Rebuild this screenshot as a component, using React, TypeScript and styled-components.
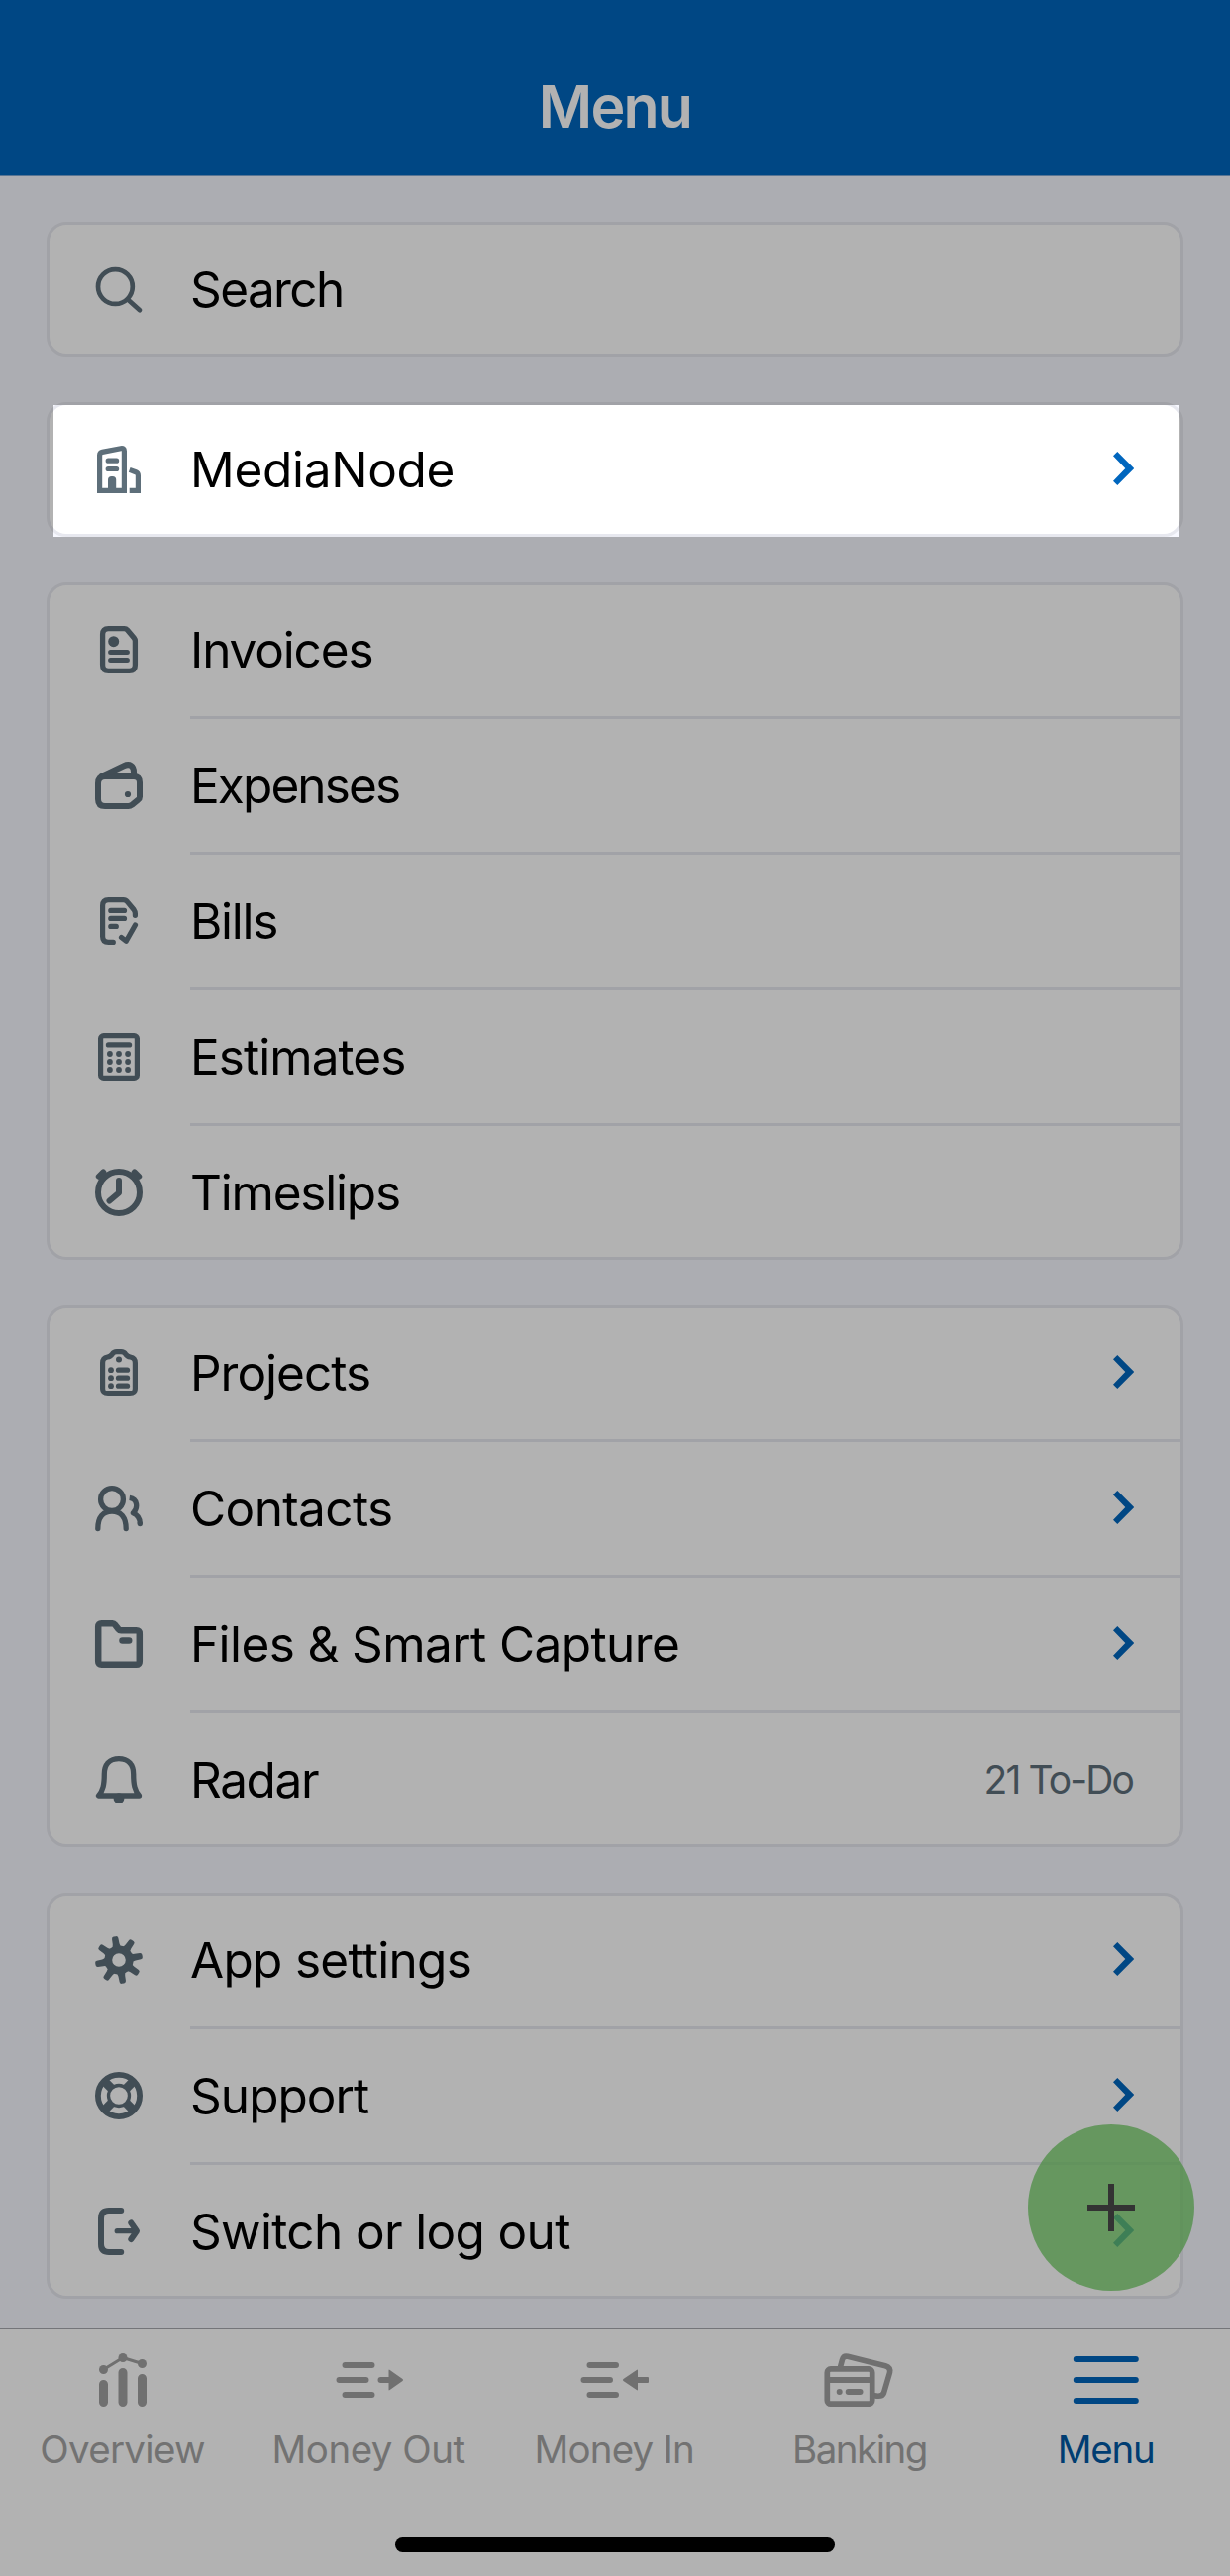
import React from "react";
import styled, { createGlobalStyle } from "styled-components";

const GlobalStyle = createGlobalStyle`
  * { box-sizing: border-box; }
  body { margin: 0; background: #f7f8ff; }
`;

const blue = "#0066be";
const slate = "#5e6f7a";

const Screen = styled.div`
  position: relative;
  display: flex;
  flex-direction: column;
  width: 1242px;
  height: 2601px;
  overflow: hidden;
  background: #f7f8ff;
  font-family: Inter, "Liberation Sans", sans-serif;
  color: #000;
`;

const Header = styled.header`
  display: flex;
  align-items: center;
  justify-content: center;
  height: 178px;
  padding-top: 38px;
  background: ${blue};
  border-bottom: 1px solid #7ea8d4;
`;

const Title = styled.h1`
  margin: 0;
  font-size: 59px;
  font-weight: 600;
  letter-spacing: -1.8px;
  color: #fff;
`;

const Content = styled.main`
  display: flex;
  flex: 1;
  flex-direction: column;
  gap: 46px;
  padding: 46px 47px 0;
`;

const Card = styled.section`
  border: 3px solid #e7e8ef;
  border-radius: 20px;
  background: #fff;
`;

const List = styled.div`
  display: flex;
  flex-direction: column;
  margin: -2px 0;
`;

const Row = styled.div`
  display: grid;
  grid-template-columns: 142px 1fr;
  align-items: start;
`;

const IconCell = styled.div`
  display: flex;
  align-items: center;
  height: 134px;
  padding-left: 46px;
  color: ${slate};
`;

const RowBody = styled.div<{ $divided: boolean }>`
  display: flex;
  align-items: center;
  justify-content: space-between;
  height: ${(p) => (p.$divided ? 137 : 134)}px;
  padding: 0 47px 0 0;
  border-bottom: ${(p) => (p.$divided ? "3px solid #e7e8ef" : "none")};
`;

const Label = styled.span<{ $tracking: number }>`
  font-size: 49.5px;
  letter-spacing: ${(p) => p.$tracking}px;
  white-space: nowrap;
`;

const Count = styled.span`
  margin: 0 1px 2px 0;
  font-size: 39px;
  letter-spacing: -1.9px;
  color: ${slate};
`;

const ChevronSvg = styled.svg`
  display: block;
  width: 21px;
  height: 34px;
  margin-bottom: 3px;
  fill: ${blue};
`;

const GlyphSvg = styled.svg<{ $weight: number }>`
  display: block;
  width: 48px;
  height: 48px;
  overflow: visible;
  fill: none;
  stroke: currentColor;
  stroke-width: ${(p) => p.$weight};
  stroke-linecap: round;
  stroke-linejoin: round;
  .solid { fill: currentColor; stroke: none; }
  .butt { stroke-linecap: butt; }
  .miter { stroke-linejoin: miter; }
`;

const AddButton = styled.button`
  position: absolute;
  left: 1038px;
  top: 2145px;
  display: flex;
  align-items: center;
  justify-content: center;
  width: 168px;
  height: 168px;
  padding: 0;
  border: 0;
  border-radius: 50%;
  background: rgba(115, 205, 104, 0.78);
`;

const TabBar = styled.nav`
  display: flex;
  height: 250px;
  padding-top: 24px;
  border-top: 1px solid #a7a8ae;
  background: #fff;
`;

const Tab = styled.div<{ $active?: boolean }>`
  display: flex;
  flex: 1;
  flex-direction: column;
  align-items: center;
  color: ${(p) => (p.$active ? blue : "#a1a1a1")};
`;

const TabSvg = styled.svg`
  display: block;
  width: 70px;
  height: 54px;
  overflow: visible;
  fill: none;
  stroke: currentColor;
  stroke-width: 6;
  stroke-linecap: round;
  stroke-linejoin: round;
  .solid { fill: currentColor; stroke: none; }
`;

const TabLabel = styled.span<{ $active?: boolean; $tracking: number }>`
  margin-top: 19px;
  padding-right: ${(p) => -2 * p.$tracking}px;
  font-size: 38.5px;
  line-height: 48px;
  letter-spacing: ${(p) => p.$tracking}px;
  white-space: nowrap;
  color: ${(p) => (p.$active ? "#0058a4" : "#a4a4a4")};
`;

const Spotlight = styled.div`
  position: absolute;
  left: 54px;
  top: 409px;
  width: 1137px;
  height: 133px;
  box-shadow: 0 0 0 2600px rgba(0, 0, 0, 0.3);
  pointer-events: none;
`;

const HomeIndicator = styled.div`
  position: absolute;
  left: 399px;
  top: 2562px;
  width: 444px;
  height: 15px;
  border-radius: 8px;
  background: #000;
`;

const glyphs: Record<string, { weight: number; art: React.ReactNode }> = {
  search: {
    weight: 4.7,
    art: (
      <>
        <circle cx="20.4" cy="21.5" r="17.4" />
        <path d="M33 34.5 45 45.3" />
      </>
    ),
  },
  building: {
    weight: 5.2,
    art: (
      <>
        <path className="butt miter" d="M4.6 45.4V9.8q0-2.8 2.7-3.4L26 2.7q3.4-.6 3.4 2.7V45.4Z" />
        <path d="M13.2 15.2H21.6M13.2 23.5H21.6" />
        <path className="solid" d="M13 46V34.5q0-3.5 3.5-3.5h1.2q3.5 0 3.5 3.5V46Z" />
        <path className="butt miter" d="M34.7 24.4 41 26.7q2.4 1 2.4 3.6V45.4H34.7" />
      </>
    ),
  },
  invoice: {
    weight: 5.3,
    art: (
      <>
        <path d="M13.5 2.6H29.5q1.8 0 3 1.4L39.2 12q1.2 1.5 1.2 3.2V39.5q0 5.900-6 5.900H13.500q-5.900 0-5.900-5.900V8.500q0-5.900 5.900-5.900Z" />
        <circle className="solid" cx="18.7" cy="15.7" r="5.5" />
        <path d="M15.6 26.4H32.4M15.6 34.4H32.4" strokeWidth="5" />
      </>
    ),
  },
  wallet: {
    weight: 6,
    art: (
      <>
        <path d="M10 15H39q6 0 6 6V35.5q0 2-1.6 3.2L37 43.8Q35.6 45 33.5 45H10q-7 0-7-7V22q0-7 7-7Z" />
        <path d="M6.5 15 29 4.2C35 1.4 39 4.5 39 10.5V15" />
        <circle className="solid" cx="33" cy="33" r="3.1" />
      </>
    ),
  },
  bill: {
    weight: 5.2,
    art: (
      <>
        <path d="M18.3 45.4H13.5q-5.900 0-5.900-5.900V8.500q0-5.900 5.900-5.900H28.500q2.500 0 4 2L39 12.500q1.400 2 1.400 4V18.300" />
        <path d="M15.8 13.4H29.5M15.8 21.4H29.5M15.8 29.4H21.3" />
        <path d="M26.5 40.5 31.3 44.3 40.5 28" />
      </>
    ),
  },
  calculator: {
    weight: 5.2,
    art: (
      <>
        <rect x="5.6" y="2.6" width="36.8" height="42.8" rx="3" />
        <path d="M13.5 11.9H34.5" strokeWidth="5.4" />
        {[21, 29, 37].map((y) =>
          [14.9, 24, 33.1].map((x) => <circle key={`${x}-${y}`} className="solid" cx={x} cy={y} r="2.9" />)
        )}
      </>
    ),
  },
  clock: {
    weight: 6,
    art: (
      <>
        <circle cx="24" cy="24" r="21" />
        <path d="M24 12V24.5L14.5 32.5" />
        <path d="M3.8 7.8 8.3 3.5M44.2 7.8 39.7 3.5" />
      </>
    ),
  },
  clipboard: {
    weight: 5.2,
    art: (
      <>
        <path d="M12.5 8q3.2-.4 4.7-2.9 1.6-2.500 4.600-2.500h4.400q3 0 4.600 2.500 1.500 2.500 4.700 2.900 4.900.8 4.900 6V40q0 5.400-5.400 5.400H13q-5.400 0-5.400-5.400V14q0-5.200 4.900-6Z" />
        <circle className="solid" cx="24" cy="10.5" r="3" />
        {[21.2, 29.2, 37.2].map((y) => (
          <g key={y}>
            <circle className="solid" cx="16" cy={y} r="2.9" />
            <path d={`M23.5 ${y}H32.5`} />
          </g>
        ))}
      </>
    ),
  },
  contacts: {
    weight: 5.3,
    art: (
      <>
        <circle cx="17" cy="15" r="11.4" />
        <path d="M2.800 44.500C2.800 33 8 27 17 27S31.200 33 31.200 44.500" />
        <path className="butt" d="M45.300 39.500C45.300 35 43 30.800 38.300 28.800 43.500 24 43 14.500 34.700 13.400" />
        <circle className="solid" cx="45.3" cy="39.5" r="2.650" />
      </>
    ),
  },
  folder: {
    weight: 6.5,
    art: (
      <>
        <path d="M6.5 3.2H17.5q1.5 0 2.4 1.2L23.5 9q1 1.3 2.7 1.3H41.5q3.3 0 3.3 3.3V41.5q0 3.3-3.3 3.3H6.5q-3.3 0-3.3-3.3V6.5q0-3.3 3.3-3.3Z" />
        <path d="M27.5 20.500H34.200" />
      </>
    ),
  },
  bell: {
    weight: 5.3,
    art: (
      <>
        <path d="M3.500 40H44.500C40 34.500 38.700 29 38.700 18 38.700 8 33 2.600 24 2.600S9.300 8 9.300 18C9.300 29 8 34.500 3.500 40Z" />
        <circle className="solid" cx="24" cy="42.7" r="5.4" />
      </>
    ),
  },
  gear: {
    weight: 5.6,
    art: (
      <>
        <circle cx="24" cy="24" r="10.700" strokeWidth="7.800" />
        {[0, 1, 2, 3, 4, 5, 6, 7].map((i) => (
          <path
            key={i}
            className="solid"
            transform={`rotate(${i * 45 - 10} 24 24)`}
            d="M18 12.500Q20.600 10.500 20.600 7.500L20.800 2Q20.900 0 22.900 0H25.100Q27.100 0 27.200 2L27.400 7.500Q27.400 10.500 30 12.500Z"
          />
        ))}
      </>
    ),
  },
  lifebuoy: {
    weight: 5.8,
    art: (
      <>
        <circle cx="24" cy="24" r="21.1" />
        <circle cx="24" cy="24" r="10.500" strokeWidth="3.300" />
        {[45, 135, 225, 315].map((a) => (
          <path key={a} transform={`rotate(${a} 24 24)`} className="butt" strokeWidth="9" d="M24 13.500V4" />
        ))}
      </>
    ),
  },
  logout: {
    weight: 6,
    art: (
      <>
        <path d="M26.2 3H14q-8 0-8 8V37q0 8 8 8H26.200" />
        <path d="M22.200 23.700H39" strokeWidth="5.200" />
        <path d="M36.300 15.500 42 23.700 36.300 32" />
      </>
    ),
  },
};

const Glyph = ({ name }: { name: string }) => (
  <GlyphSvg viewBox="0 0 48 48" $weight={glyphs[name].weight} aria-hidden>
    {glyphs[name].art}
  </GlyphSvg>
);

const Chevron = () => (
  <ChevronSvg viewBox="0 0 21 34" aria-hidden>
    <path d="M4.300 0 21.200 17 4.300 34 0 29.700 12.300 17 0 4.300Z" />
  </ChevronSvg>
);

type Item = { icon: string; label: string; tracking: number; chevron?: boolean; count?: string };

const groups: Item[][] = [
  [{ icon: "search", label: "Search", tracking: -1.6 }],
  [{ icon: "building", label: "MediaNode", tracking: -0.3, chevron: true }],
  [
    { icon: "invoice", label: "Invoices", tracking: -1.15 },
    { icon: "wallet", label: "Expenses", tracking: -1.9 },
    { icon: "bill", label: "Bills", tracking: -1.3 },
    { icon: "calculator", label: "Estimates", tracking: -0.95 },
    { icon: "clock", label: "Timeslips", tracking: -1.2 },
  ],
  [
    { icon: "clipboard", label: "Projects", tracking: -1, chevron: true },
    { icon: "contacts", label: "Contacts", tracking: -0.6, chevron: true },
    { icon: "folder", label: "Files & Smart Capture", tracking: -0.6, chevron: true },
    { icon: "bell", label: "Radar", tracking: -1.4, count: "21 To-Do" },
  ],
  [
    { icon: "gear", label: "App settings", tracking: -0.7, chevron: true },
    { icon: "lifebuoy", label: "Support", tracking: -0.95, chevron: true },
    { icon: "logout", label: "Switch or log out", tracking: -0.65, chevron: true },
  ],
];

const tabs: { label: string; tracking: number; active?: boolean; art: React.ReactNode }[] = [
  {
    label: "Overview",
    tracking: -0.7,
    art: (
      <>
        <path strokeWidth="9" d="M15.5 31.5V49.5M35 19.5V49.5M54.5 25.5V49.5" />
        <path strokeWidth="3" d="M15.5 16.5 35 4.5 54.5 10.5" />
        <circle className="solid" cx="15.5" cy="16.5" r="4.5" />
        <circle className="solid" cx="35" cy="4.5" r="4.5" />
        <circle className="solid" cx="54.5" cy="10.5" r="4.5" />
      </>
    ),
  },
  {
    label: "Money Out",
    tracking: -0.5,
    art: (
      <>
        <path d="M10.5 12H37.5M4.500 27H31.500M10.500 42H37.500M46.500 27H56" />
        <path className="solid" d="M54.500 17.500q0-1.500 1.200-.5L68.500 26q1.300 1 0 2L55.700 37q-1.200 1-1.200-.5Z" />
      </>
    ),
  },
  {
    label: "Money In",
    tracking: -0.8,
    art: (
      <>
        <path d="M9.500 12H36M3.500 27H30M9.500 42H36" />
        <path className="solid" d="M58 17.500q0-1.500-1.200-.5L43.500 26q-1.300 1 0 2L56.800 37q1.200 1 1.200-.5V30H68q1 0 1-1V25q0-1-1-1H58Z" />
      </>
    ),
  },
  {
    label: "Banking",
    tracking: -1.5,
    art: (
      <g transform="translate(-1 0)">
        <path d="M15.500 14 17.500 6.500Q18.800 2.300 23 3.300L61 12.800Q66.500 14.500 65.500 19.500L59.500 40Q58 44.500 50 42.800" strokeWidth="5.600" />
        <rect x="2.300" y="15.900" width="45.400" height="35.300" rx="3.500" strokeWidth="5.700" />
        <path className="solid" d="M1 24H49V30H1Z" />
        <path d="M23.700 39H35.500" />
        <circle className="solid" cx="14.700" cy="39" r="3" />
      </g>
    ),
  },
  {
    label: "Menu",
    tracking: -1.2,
    active: true,
    art: <path transform="translate(-.7 0)" d="M4.500 6H64.500M4.500 27H64.500M4.500 48H64.500" />,
  },
];

export default function App() {
  return (
    <Screen>
      <GlobalStyle />
      <Header>
        <Title>Menu</Title>
      </Header>
      <Content>
        {groups.map((items) => (
          <Card key={items[0].label}>
            <List>
              {items.map((item, i) => (
                <Row key={item.label}>
                  <IconCell>
                    <Glyph name={item.icon} />
                  </IconCell>
                  <RowBody $divided={i < items.length - 1}>
                    <Label $tracking={item.tracking}>{item.label}</Label>
                    {item.chevron && <Chevron />}
                    {item.count && <Count>{item.count}</Count>}
                  </RowBody>
                </Row>
              ))}
            </List>
          </Card>
        ))}
      </Content>
      <TabBar>
        {tabs.map((tab) => (
          <Tab key={tab.label} $active={tab.active}>
            <TabSvg viewBox="0 0 70 54" aria-hidden>
              {tab.art}
            </TabSvg>
            <TabLabel $active={tab.active} $tracking={tab.tracking}>
              {tab.label}
            </TabLabel>
          </Tab>
        ))}
      </TabBar>
      <AddButton aria-label="Add">
        <svg width="48" height="48" viewBox="0 0 48 48" fill="none" stroke="#4a4a4a" strokeWidth="6">
          <path d="M24 0V48M0 24H48" />
        </svg>
      </AddButton>
      <Spotlight />
      <HomeIndicator />
    </Screen>
  );
}
